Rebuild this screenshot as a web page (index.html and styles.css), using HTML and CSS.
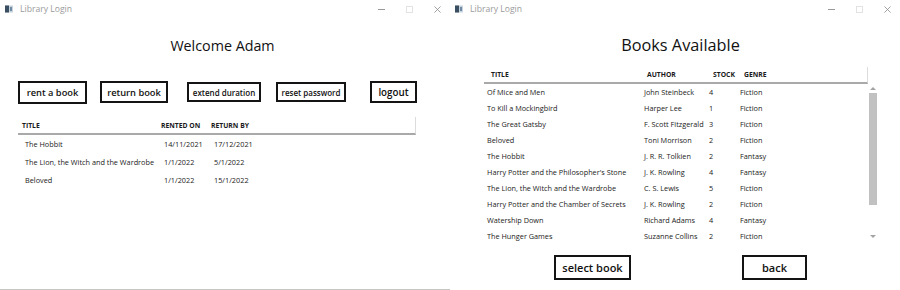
FILE: index.html
```html
<!DOCTYPE html>
<html>
<head>
<meta charset="utf-8">
<link rel="stylesheet" href="styles.css">
</head>
<body>
<div class="screen">
  <section class="window win-left">
    <header class="titlebar">
      <svg class="app-icon" width="8" height="8" viewBox="0 0 8 8"><rect x="0" y="0.5" width="8" height="7" fill="#c9d3dc"/><rect x="0" y="0.5" width="4" height="7" fill="#3b4f63"/><rect x="5" y="2" width="2" height="4" fill="#6d8aa6"/></svg>
      <span class="win-title">Library Login</span>
      <div class="controls">
        <span class="ctl-min"></span>
        <span class="ctl-max"></span>
        <svg class="ctl-close" width="8" height="8" viewBox="0 0 8 8"><path d="M0.5 0.5 L7.5 7.5 M7.5 0.5 L0.5 7.5" stroke="#8a8a8a" stroke-width="0.9"/></svg>
      </div>
    </header>
    <h1 class="heading heading-left">Welcome Adam</h1>
    <div class="actions">
      <button class="btn btn-rent">rent a book</button>
      <button class="btn btn-return">return book</button>
      <button class="btn btn-small btn-extend">extend duration</button>
      <button class="btn btn-small btn-reset">reset password</button>
      <button class="btn btn-logout">logout</button>
    </div>
    <div class="rented">
      <div class="thead rented-cols">
        <span>TITLE</span><span>RENTED ON</span><span>RETURN BY</span>
      </div>
      <div class="trow rented-cols"><span>The Hobbit</span><span>14/11/2021</span><span>17/12/2021</span></div>
      <div class="trow rented-cols"><span>The Lion, the Witch and the Wardrobe</span><span>1/1/2022</span><span>5/1/2022</span></div>
      <div class="trow rented-cols"><span>Beloved</span><span>1/1/2022</span><span>15/1/2022</span></div>
    </div>
  </section>

  <section class="window win-right">
    <header class="titlebar">
      <svg class="app-icon" width="8" height="8" viewBox="0 0 8 8"><rect x="0" y="0.5" width="8" height="7" fill="#c9d3dc"/><rect x="0" y="0.5" width="4" height="7" fill="#3b4f63"/><rect x="5" y="2" width="2" height="4" fill="#6d8aa6"/></svg>
      <span class="win-title">Library Login</span>
      <div class="controls">
        <span class="ctl-min"></span>
        <span class="ctl-max"></span>
        <svg class="ctl-close" width="8" height="8" viewBox="0 0 8 8"><path d="M0.5 0.5 L7.5 7.5 M7.5 0.5 L0.5 7.5" stroke="#8a8a8a" stroke-width="0.9"/></svg>
      </div>
    </header>
    <h1 class="heading heading-right">Books Available</h1>
    <div class="books">
      <div class="thead books-cols">
        <span>TITLE</span><span>AUTHOR</span><span>STOCK</span><span>GENRE</span>
      </div>
      <div class="books-body">
        <div class="books-rows">
          <div class="trow books-cols"><span>Of Mice and Men</span><span>John Steinbeck</span><span>4</span><span>Fiction</span></div>
          <div class="trow books-cols"><span>To Kill a Mockingbird</span><span>Harper Lee</span><span>1</span><span>Fiction</span></div>
          <div class="trow books-cols"><span>The Great Gatsby</span><span>F. Scott Fitzgerald</span><span>3</span><span>Fiction</span></div>
          <div class="trow books-cols"><span>Beloved</span><span>Toni Morrison</span><span>2</span><span>Fiction</span></div>
          <div class="trow books-cols"><span>The Hobbit</span><span>J. R. R. Tolkien</span><span>2</span><span>Fantasy</span></div>
          <div class="trow books-cols"><span>Harry Potter and the Philosopher's Stone</span><span>J. K. Rowling</span><span>4</span><span>Fantasy</span></div>
          <div class="trow books-cols"><span>The Lion, the Witch and the Wardrobe</span><span>C. S. Lewis</span><span>5</span><span>Fiction</span></div>
          <div class="trow books-cols"><span>Harry Potter and the Chamber of Secrets</span><span>J. K. Rowling</span><span>2</span><span>Fiction</span></div>
          <div class="trow books-cols"><span>Watership Down</span><span>Richard Adams</span><span>4</span><span>Fantasy</span></div>
          <div class="trow books-cols"><span>The Hunger Games</span><span>Suzanne Collins</span><span>2</span><span>Fiction</span></div>
        </div>
        <div class="scrollbar">
          <span class="arrow-up"></span>
          <span class="thumb"></span>
          <span class="arrow-down"></span>
        </div>
      </div>
    </div>
    <div class="book-actions">
      <button class="btn btn-big btn-select">select book</button>
      <button class="btn btn-big btn-back">back</button>
    </div>
  </section>
</div>
</body>
</html>
```

FILE: styles.css
```css
* { box-sizing: border-box; }
html, body { margin: 0; padding: 0; background: #fff; }
body {
  width: 900px;
  height: 290px;
  overflow: hidden;
  font-family: "Open Sans", "Noto Sans", sans-serif;
  color: #1a1a1a;
}
.screen { display: flex; width: 900px; height: 290px; }
.window {
  width: 450px;
  height: 290px;
  display: flex;
  flex-direction: column;
}
.win-left { border-bottom: 1px solid #c6c6c6; }

/* title bar */
.titlebar {
  height: 18px;
  display: flex;
  align-items: center;
  padding: 0 9px 0 5px;
}
.app-icon { display: block; margin-right: 7px; }
.win-title { font-size: 8.6px; color: #9a9a9a; }
.controls {
  margin-left: auto;
  display: flex;
  align-items: center;
  gap: 21px;
}
.ctl-min { width: 7px; height: 1px; background: #9a9a9a; }
.ctl-max { width: 7px; height: 7px; border: 1px solid #e2e2e2; }
.ctl-close { display: block; width: 7px; height: 7px; }

/* headings */
.heading {
  margin: 0;
  font-weight: 400;
  text-align: center;
  line-height: 20px;
  color: #111;
}
.heading-left { margin-top: 18px; font-size: 14.3px; padding-right: 5px; }
.heading-right { margin-top: 17px; font-size: 16.3px; padding-left: 11px; }

/* buttons */
.btn {
  font-family: inherit;
  background: #fff;
  border: 2px solid #141414;
  color: #111;
  font-weight: 600;
  padding: 0;
  margin: 0;
  display: flex;
  align-items: center;
  justify-content: center;
}
.actions {
  margin-top: 24px;
  height: 24px;
  display: flex;
  align-items: center;
  padding-left: 18px;
}
.btn-rent { width: 69px; height: 23px; font-size: 9.3px; }
.btn-return { width: 68px; height: 22px; font-size: 9.3px; margin-left: 13px; }
.btn-small { font-size: 8px; height: 20px; }
.btn-extend { width: 74px; margin-left: 19px; }
.btn-reset { width: 70px; margin-left: 15px; }
.btn-logout { width: 47px; height: 22px; font-size: 9.8px; margin-left: 24px; }

/* tables */
.thead {
  font-weight: 700;
  font-size: 6.8px;
  color: #1a1a1a;
  border-bottom: 2px solid #a9a9a9;
  border-right: 1px solid #dcdcdc;
  align-items: center;
}
.trow {
  font-size: 7.3px;
  color: #222;
  align-items: center;
  white-space: nowrap;
}
.rented { margin-top: 13px; margin-left: 18px; width: 398px; }
.rented-cols {
  display: grid;
  grid-template-columns: 139px 50px 1fr;
}
.rented .thead { height: 18px; }
.rented .thead span { padding-left: 4px; }
.rented .trow { height: 18px; }
.rented .trow span { padding-left: 7px; }

.books { margin-top: 12px; margin-left: 34px; width: 393px; }
.books-cols {
  display: grid;
  grid-template-columns: 157px 65px 31px 1fr;
}
.books .thead { height: 17px; width: 384px; }
.books .thead span { padding-left: 7px; }
.books .thead span:nth-child(2) { padding-left: 6px; }
.books-body { display: flex; height: 160px; }
.books-rows { width: 384px; }
.books .trow { height: 16px; }
.books .trow span { padding-left: 3px; }

.scrollbar {
  width: 9px;
  display: flex;
  flex-direction: column;
  align-items: center;
  padding: 3px 0 6px 1px;
}
.arrow-up {
  width: 0; height: 0;
  border-left: 3.5px solid transparent;
  border-right: 3.5px solid transparent;
  border-bottom: 3px solid #a3a3a3;
}
.thumb {
  margin-top: 3px;
  width: 8px;
  height: 112px;
  background: #c1c1c1;
}
.arrow-down {
  margin-top: auto;
  width: 0; height: 0;
  border-left: 3.5px solid transparent;
  border-right: 3.5px solid transparent;
  border-top: 3px solid #a3a3a3;
}

.book-actions {
  margin-top: 11px;
  display: flex;
  padding-left: 104px;
}
.btn-big { height: 25px; font-size: 11px; }
.btn-select { width: 77px; }
.btn-back { width: 65px; margin-left: 111px; }
```
